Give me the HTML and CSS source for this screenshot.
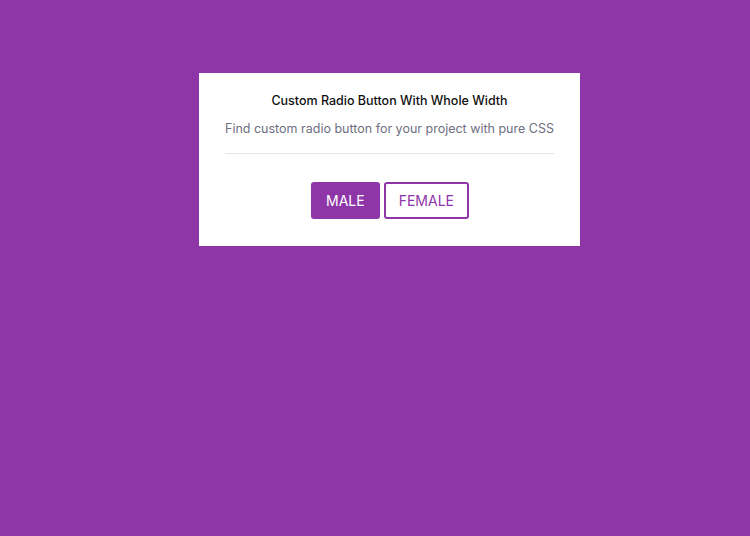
FILE: index.html
```html
<!DOCTYPE html>
<html>
<head>
<meta charset="utf-8">
<link rel="stylesheet" href="styles.css">
</head>
<body>
<div class="page">
  <div class="card">
    <h1 class="title">Custom Radio Button With Whole Width</h1>
    <p class="subtitle">Find custom radio button for your project with pure CSS</p>
    <hr class="divider">
    <div class="options">
      <label class="option option-active"><input type="radio" name="g" checked>MALE</label>
      <label class="option"><input type="radio" name="g">FEMALE</label>
    </div>
  </div>
</div>
</body>
</html>
```

FILE: styles.css
```css
html, body {
  margin: 0;
  padding: 0;
  background: #8e36a8;
  height: 100%;
}
.page {
  padding-top: 73px;
  padding-left: 199px;
}
.card {
  width: 381px;
  box-sizing: border-box;
  background: #fff;
  padding: 20px 26px 27px;
  font-family: Inter, "Noto Sans", sans-serif;
  text-align: center;
}
.title {
  margin: 0;
  font-size: 12.5px;
  font-weight: 500;
  color: #111;
  line-height: 16px;
}
.subtitle {
  margin: 12px 0 0;
  font-size: 12.5px;
  color: #6f6f7f;
  line-height: 16px;
}
.divider {
  border: 0;
  border-top: 1px solid #e5e5e5;
  margin: 16px 0 28px;
}
.options {
  display: flex;
  justify-content: center;
  gap: 4px;
  padding-left: 1px;
}
.option {
  box-sizing: border-box;
  height: 37px;
  padding: 0 13px;
  display: flex;
  align-items: center;
  font-size: 14px;
  color: #8e36a8;
  border: 2px solid #8e36a8;
  border-radius: 3px;
  background: #fff;
}
.option input {
  display: none;
}
.option-active {
  background: #8e36a8;
  color: #fff;
}
```
